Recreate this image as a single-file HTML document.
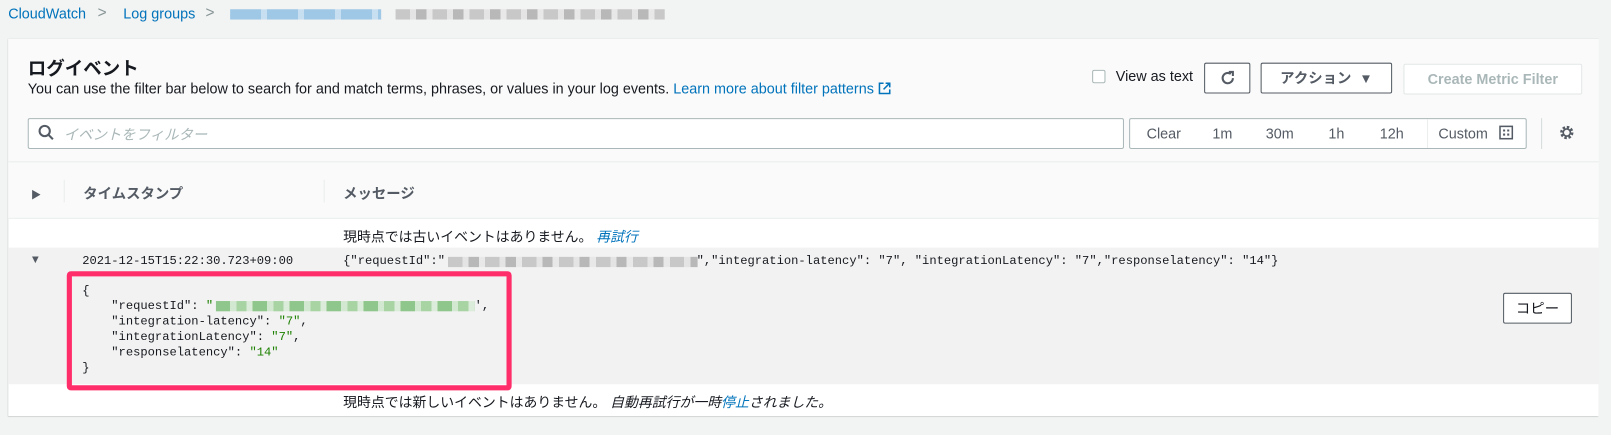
<!DOCTYPE html>
<html><head><meta charset="utf-8"><style>
*{box-sizing:border-box;margin:0;padding:0}
body{width:1611px;height:434px;background:#f2f3f3;font-family:"Liberation Sans","Noto Sans CJK JP",sans-serif;color:#16191f;position:relative;overflow:hidden;font-size:14px}
#w{position:absolute;left:0;top:0;width:1568px;height:423px;transform:scale(1.0274);transform-origin:0 0}
.a{position:absolute;white-space:nowrap}
.link{color:#0073bb}
.mono{font-family:"Liberation Mono","Noto Sans CJK JP",monospace;font-size:11.8px}
.btn{position:absolute;border:1px solid #545b64;border-radius:2px;background:#fff;display:flex;align-items:center;justify-content:center;font-weight:bold;color:#545b64;font-size:14px}
.blur{position:absolute;height:10px;background:repeating-linear-gradient(90deg,#c8c8c8 0 14px,#e4e4e4 14px 20px,#b8b8b8 20px 30px,#e8e8e8 30px 36px)}
</style></head><body><div id="w">
<div class="a link" style="left:8px;top:5px;font-size:14px">CloudWatch</div>
<div class="a" style="left:95px;top:4px;color:#879596;font-size:15px">&gt;</div>
<div class="a link" style="left:120px;top:5px">Log groups</div>
<div class="a" style="left:200px;top:4px;color:#879596;font-size:15px">&gt;</div>
<div class="blur" style="left:224px;top:9px;width:147px;background:repeating-linear-gradient(90deg,#9ec8e6 0 30px,#c7dff0 30px 36px)"></div>
<div class="blur" style="left:385px;top:9px;width:262px"></div>

<div class="a" style="left:8px;top:37px;width:1548px;height:368px;background:#fff;box-shadow:0 1px 1px rgba(0,28,36,.3);border-top:1px solid #eaeded"></div>
<div class="a" style="left:8px;top:38px;width:1548px;height:175px;background:#fafafa;border-bottom:1px solid #eaeded"></div>
<div class="a" style="left:8px;top:157px;width:1548px;height:1px;background:#eaeded"></div>

<div class="a" style="left:27px;top:53px;font-size:18px;font-weight:bold">ログイベント</div>
<div class="a" style="left:27px;top:78px;font-size:14px">You can use the filter bar below to search for and match terms, phrases, or values in your log events. <span class="link">Learn more about filter patterns</span> <svg width="12" height="12" viewBox="0 0 12 12" style="vertical-align:-1px"><path d="M5 1H1v10h10V7M7 1h4v4M11 1L5 7" fill="none" stroke="#0073bb" stroke-width="1.5"/></svg></div>

<div class="a" style="left:1063px;top:68px;width:13px;height:13px;border:1px solid #aab7b8;border-radius:2px;background:#fff"></div>
<div class="a" style="left:1086px;top:66px;font-size:14px">View as text</div>
<div class="btn" style="left:1172px;top:61px;width:45px;height:30px"><svg width="16" height="16" viewBox="0 0 16 16"><path d="M13 8a5 5 0 1 1-2-4" fill="none" stroke="#545b64" stroke-width="2"/><path d="M9 2h4v4" fill="none" stroke="#545b64" stroke-width="2"/></svg></div>
<div class="btn" style="left:1227px;top:61px;width:128px;height:30px">アクション&nbsp;&nbsp;<span style="font-size:13px">▼</span></div>
<div class="btn" style="left:1366px;top:62px;width:174px;height:30px;border-color:#e3e7e7;color:#aab7b8">Create Metric Filter</div>

<div class="a" style="left:27px;top:115px;width:1067px;height:30px;border:1px solid #aab7b8;border-radius:2px;background:#fff"></div>
<svg class="a" style="left:37px;top:121px" width="16" height="16" viewBox="0 0 16 16"><circle cx="6.5" cy="6.5" r="5" fill="none" stroke="#545b64" stroke-width="2"/><path d="M10 10l4.5 4.5" stroke="#545b64" stroke-width="2"/></svg>
<div class="a" style="left:62px;top:121px;color:#aab7b8;font-style:italic;font-size:14px">イベントをフィルター</div>
<div class="a" style="left:1099px;top:115px;width:387px;height:30px;border:1px solid #aab7b8;border-radius:2px;background:#fff"></div>
<div class="a" style="left:1389px;top:116px;width:1px;height:28px;background:#eaeded"></div>
<div class="a" style="left:1116px;top:122px;color:#545b64">Clear</div>
<div class="a" style="left:1180px;top:122px;color:#545b64">1m</div>
<div class="a" style="left:1232px;top:122px;color:#545b64">30m</div>
<div class="a" style="left:1293px;top:122px;color:#545b64">1h</div>
<div class="a" style="left:1343px;top:122px;color:#545b64">12h</div>
<div class="a" style="left:1400px;top:122px;color:#545b64">Custom</div>
<svg class="a" style="left:1459px;top:122px" width="14" height="14" viewBox="0 0 14 14"><rect x="1" y="1" width="12" height="12" fill="none" stroke="#545b64" stroke-width="1.5"/><path d="M4 4h2v2H4zM8 4h2v2H8zM4 8h2v2H4zM8 8h2v2H8z" fill="#545b64"/></svg>
<div class="a" style="left:1500px;top:115px;width:1px;height:30px;background:#d5dbdb"></div>
<svg class="a" style="left:1517px;top:121px" width="16" height="16" viewBox="0 0 16 16"><circle cx="8" cy="8" r="5" fill="none" stroke="#545b64" stroke-width="3" stroke-dasharray="2.3 1.6"/><circle cx="8" cy="8" r="3.5" fill="none" stroke="#545b64" stroke-width="1.6"/></svg>

<div class="a" style="left:30px;top:181px;font-size:10px;color:#545b64">▶</div>
<div class="a" style="left:62px;top:175px;width:1px;height:22px;background:#eaeded"></div>
<div class="a" style="left:81px;top:178px;font-weight:bold;color:#545b64">タイムスタンプ</div>
<div class="a" style="left:315px;top:175px;width:1px;height:22px;background:#eaeded"></div>
<div class="a" style="left:334px;top:178px;font-weight:bold;color:#545b64">メッセージ</div>

<div class="a" style="left:334px;top:219px;font-size:13.5px">現時点では古いイベントはありません。 <i class="link">再試行</i></div>

<div class="a" style="left:8px;top:241px;width:1548px;height:133px;background:#f2f2f2"></div>
<div class="a" style="left:29px;top:247px;font-size:11px;color:#545b64">▼</div>
<div class="a mono" style="left:80px;top:247px">2021-12-15T15:22:30.723+09:00</div>
<div class="a mono" style="left:334px;top:247px">{"requestId":"</div>
<div class="blur" style="left:436px;top:250px;width:243px"></div>
<div class="a mono" style="left:678px;top:247px">","integration-latency": "7", "integrationLatency": "7","responselatency": "14"}</div>

<div class="a" style="left:65px;top:264px;width:433px;height:116px;border:5px solid #ff2e6a;border-radius:4px"></div>
<div class="a mono" style="left:80px;top:276px;line-height:15px;color:#16191f">{<br>&nbsp;&nbsp;&nbsp;&nbsp;"requestId": <span style="color:#1d8102">"</span><br>&nbsp;&nbsp;&nbsp;&nbsp;"integration-latency": <span style="color:#1d8102">"7"</span>,<br>&nbsp;&nbsp;&nbsp;&nbsp;"integrationLatency": <span style="color:#1d8102">"7"</span>,<br>&nbsp;&nbsp;&nbsp;&nbsp;"responselatency": <span style="color:#1d8102">"14"</span><br>}</div>
<div class="blur" style="left:210px;top:293px;width:252px;background:repeating-linear-gradient(90deg,#8fc68b 0 14px,#d3e8d0 14px 20px,#a8d4a4 20px 30px,#dcecda 30px 36px)"></div>
<div class="a mono" style="left:462px;top:291px">',</div>

<div class="btn" style="left:1463px;top:285px;width:67px;height:30px;font-weight:normal;color:#16191f">コピー</div>

<div class="a" style="left:334px;top:380px;font-size:13.5px">現時点では新しいイベントはありません。 <i>自動再試行が一時<span class="link">停止</span>されました。</i></div>
</div></body></html>
